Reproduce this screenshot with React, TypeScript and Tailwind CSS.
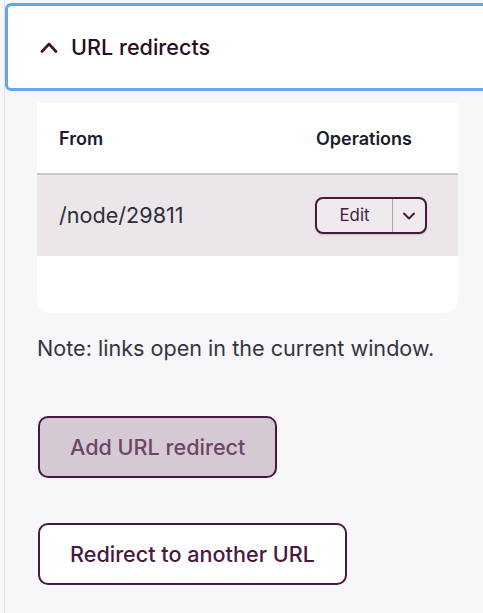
import { ChevronDown } from "lucide-react";

const App = () => {
  return (
    <div
      className="min-h-screen bg-[#f7f6f9] pl-[4px] overflow-hidden"
      style={{ fontFamily: "Inter, 'Noto Sans', sans-serif" }}
    >
      <div className="min-h-screen border-l border-[#e3e0e6] pt-[3px]">
        <div className="mr-[-12px] flex h-[88px] items-center rounded-[6px] border-[3px] border-[#63a6ef] bg-white pl-[32px]">
          <svg width="18" height="12" viewBox="0 0 18 12" className="text-[#3b0f33]">
            <polyline
              points="2,10.5 9,3 16,10.5"
              fill="none"
              stroke="currentColor"
              strokeWidth="2.6"
              strokeLinecap="round"
              strokeLinejoin="round"
            />
          </svg>
          <span className="ml-[13px] text-[21.6px] font-medium text-[#2a0c25]">
            URL redirects
          </span>
        </div>

        <div className="pl-[32px] pt-[12px]">
          <div className="w-[421px] rounded-b-[14px] bg-white pb-[57px]">
            <div className="flex h-[72px] items-center border-b-2 border-[#cbc8cc] text-[18px] font-semibold text-[#1c1a2b]">
              <div className="w-[279px] pl-[22px]">From</div>
              <div>Operations</div>
            </div>
            <div className="flex h-[81px] items-center bg-[#ebe6ea]">
              <div className="w-[278px] pl-[22px] text-[21.6px] text-[#302d3a]">
                /node/29811
              </div>
              <div className="flex h-[37px] w-[112px] items-stretch rounded-[8px] border-2 border-[#4a1742] bg-[#efeaee] shadow-[0_1px_2px_rgba(0,0,0,0.15)]">
                <button className="flex w-[75px] items-center justify-center text-[16.8px] text-[#4a1742]">
                  Edit
                </button>
                <div className="w-px bg-[#b89cb2]" />
                <button className="flex flex-1 items-center justify-center text-[#4a1742]">
                  <ChevronDown size={20} strokeWidth={2.4} />
                </button>
              </div>
            </div>
          </div>

          <p className="mt-[19px] text-[21.6px] text-[#36343f]">
            Note: links open in the current window.
          </p>

          <div className="mt-[52px] flex flex-col items-start gap-[45px] pl-px">
            <button className="h-[62px] rounded-[10px] border-2 border-[#4a1742] bg-[#d5cad3] px-[30px] text-[21.6px] font-medium text-[#6e4467]">
              Add URL redirect
            </button>
            <button className="h-[62px] rounded-[10px] border-2 border-[#4a1742] bg-white px-[30px] text-[21.6px] font-medium text-[#4a1742]">
              Redirect to another URL
            </button>
          </div>
        </div>
      </div>
    </div>
  );
};

export default App;
